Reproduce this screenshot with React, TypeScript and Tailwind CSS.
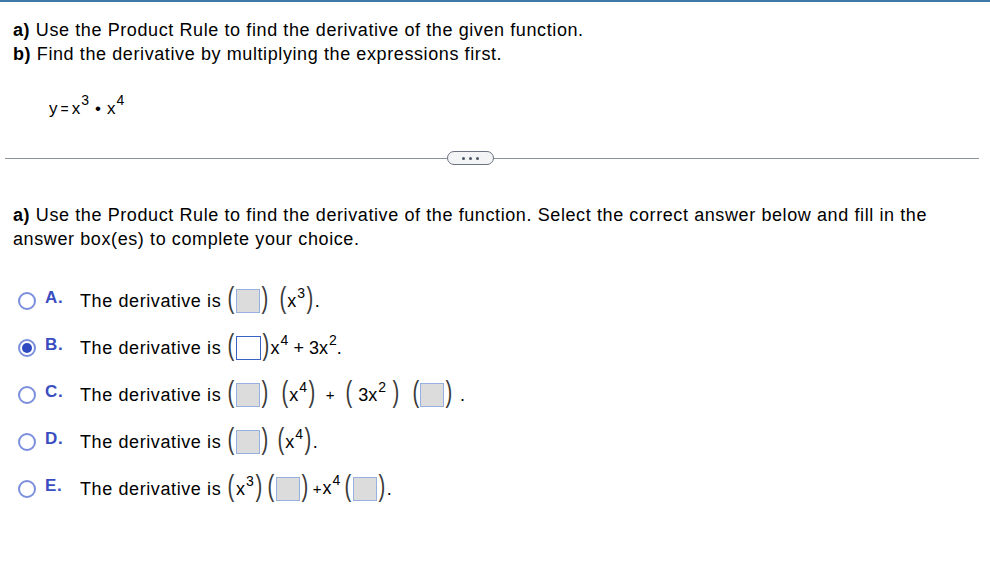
import React from 'react';

function AnswerBox({ active = false }: { active?: boolean }) {
  return (
    <span
      className={
        active
          ? 'inline-block w-[25px] h-[24px] bg-white border border-[#3a62c4]'
          : 'inline-block w-[24px] h-[24px] bg-[#dcdcdc] border border-[#98b0e0]'
      }
    />
  );
}

function P({ c }: { c: string }) {
  return (
    <span className="inline-block text-[29px] leading-none scale-x-[0.7] text-[#3a3a3a] -mt-[4px] -mx-[1px]">{c}</span>
  );
}

function Sup({ children }: { children: React.ReactNode }) {
  return <sup className="text-[14px] -top-[9px] ml-[1px]">{children}</sup>;
}

function Radio({ checked = false }: { checked?: boolean }) {
  return (
    <span className="w-[18px] h-[18px] rounded-full border-2 border-[#7b8fdc] flex items-center justify-center shrink-0">
      {checked && <span className="w-[10px] h-[10px] rounded-full bg-[#2f49c0]" />}
    </span>
  );
}

function Option({ letter, checked, children }: { letter: string; checked?: boolean; children: React.ReactNode }) {
  return (
    <div className="flex items-center h-[47px]">
      <div className="w-[80px] flex items-center pl-[18px] gap-[9px]">
        <Radio checked={checked} />
        <span className="font-bold text-[#3a4dc0] text-[17px] -mt-[6px]">{letter}.</span>
      </div>
      <span className="mr-[6px]">The derivative is</span>
      <span className="flex items-center gap-[1px] tracking-normal">{children}</span>
    </div>
  );
}

export default function App() {
  return (
    <div className="w-[990px] h-[568px] bg-white border-t-2 border-[#3d78a8] font-['Liberation_Sans',Arial,sans-serif] text-black text-[18px] tracking-[0.6px] leading-[24px] overflow-hidden">
      <div className="pl-[13px] pt-[16px]">
        <p><span className="font-bold">a)</span> Use the Product Rule to find the derivative of the given function.</p>
        <p><span className="font-bold">b)</span> Find the derivative by multiplying the expressions first.</p>
      </div>
      <div className="pl-[49px] pt-[31px] text-[17px] tracking-normal">
        y<span className="text-[14px] mx-[3px]">=</span>x<Sup>3</Sup>
        <span className="mx-[6px]">•</span>x<Sup>4</Sup>
      </div>
      <div className="flex items-center pl-[5px] mt-[30px]">
        <div className="w-[442px] h-px bg-[#8a949e]" />
        <div className="w-[47px] h-[14px] rounded-full border border-[#6b7380] bg-[#f2f4f6] flex items-center justify-center gap-[4px]">
          <span className="w-[3px] h-[3px] rounded-full bg-[#4b5563]" />
          <span className="w-[3px] h-[3px] rounded-full bg-[#4b5563]" />
          <span className="w-[3px] h-[3px] rounded-full bg-[#4b5563]" />
        </div>
        <div className="w-[485px] h-px bg-[#8a949e]" />
      </div>
      <div className="pl-[13px] pt-[38px]">
        <p>
          <span className="font-bold">a)</span> Use the Product Rule to find the derivative of the function. Select the correct answer below and fill in the
        </p>
        <p>answer box(es) to complete your choice.</p>
      </div>
      <div className="mt-[26px]">
        <Option letter="A">
          <P c="(" /><AnswerBox /><P c=")" />
          <span className="w-[8px]" />
          <P c="(" /><span>x<Sup>3</Sup></span><P c=")" />
          <span>.</span>
        </Option>
        <Option letter="B" checked>
          <P c="(" /><AnswerBox active /><P c=")" />
          <span>x<Sup>4</Sup> + 3x<Sup>2</Sup>.</span>
        </Option>
        <Option letter="C">
          <P c="(" /><AnswerBox /><P c=")" />
          <span className="w-[10px]" />
          <P c="(" /><span>x<Sup>4</Sup></span><P c=")" />
          <span className="mx-[9px] text-[15px]">+</span>
          <P c="(" /><span className="px-[5px]">3x<Sup>2</Sup></span><P c=")" />
          <span className="w-[10px]" />
          <P c="(" /><AnswerBox /><P c=")" />
          <span className="ml-[6px]">.</span>
        </Option>
        <Option letter="D">
          <P c="(" /><AnswerBox /><P c=")" />
          <span className="w-[6px]" />
          <P c="(" /><span>x<Sup>4</Sup></span><P c=")" />
          <span>.</span>
        </Option>
        <Option letter="E">
          <P c="(" /><span>x<Sup>3</Sup></span><P c=")" />
          <span className="w-[3px]" />
          <P c="(" /><AnswerBox /><P c=")" />
          <span className="mx-[3px]"><span className="text-[15px] mr-[1px]">+</span>x<Sup>4</Sup></span>
          <P c="(" /><AnswerBox /><P c=")" />
          <span>.</span>
        </Option>
      </div>
    </div>
  );
}
